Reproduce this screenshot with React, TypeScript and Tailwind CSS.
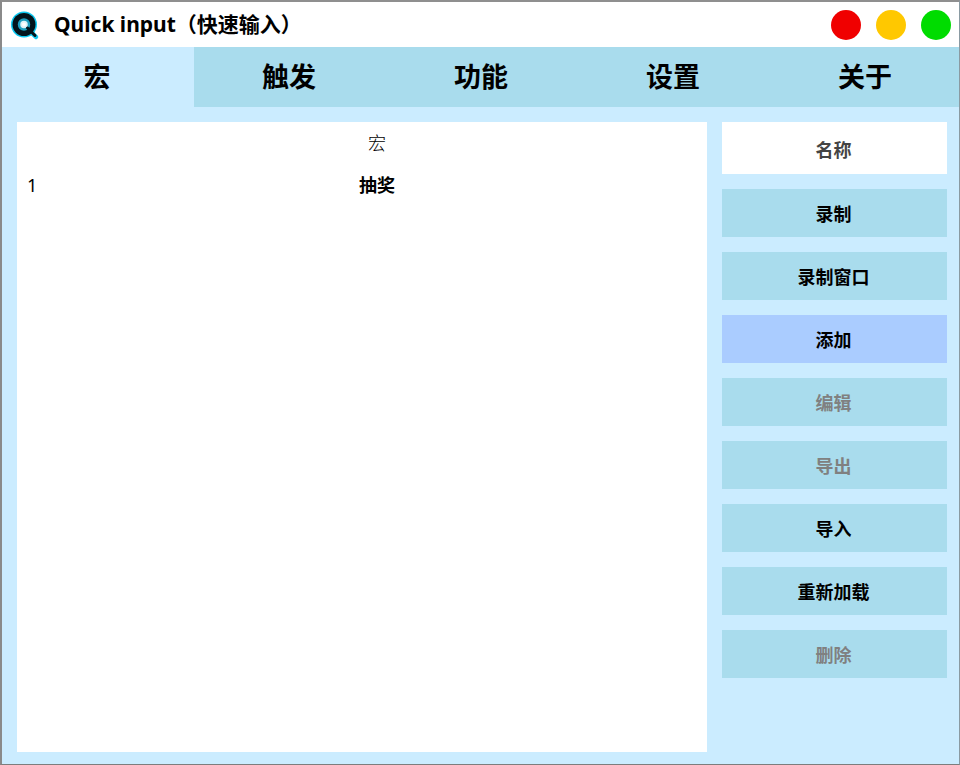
import React from "react";

const tabs = ["宏", "触发", "功能", "设置", "关于"];

const buttons = [
  { label: "录制" },
  { label: "录制窗口" },
  { label: "添加", active: true },
  { label: "编辑", disabled: true },
  { label: "导出", disabled: true },
  { label: "导入" },
  { label: "重新加载" },
  { label: "删除", disabled: true },
];

const Logo = () => (
  <svg width="30" height="30" viewBox="0 0 30 30" className="shrink-0">
    <defs>
      <filter id="glow" x="-30%" y="-30%" width="160%" height="160%">
        <feGaussianBlur stdDeviation="0.7" />
      </filter>
    </defs>
    <g filter="url(#glow)" stroke="#08c8f0" fill="none">
      <circle cx="15" cy="14.5" r="12" strokeWidth="2" />
      <path d="M20 20l7 7" strokeWidth="4.5" strokeLinecap="round" />
    </g>
    <circle cx="15" cy="14.5" r="11.5" fill="#03141c" />
    <circle cx="15" cy="14.5" r="5" fill="#dff3f8" stroke="#1f9fc0" strokeWidth="2.5" />
    <circle cx="15" cy="14.5" r="2" fill="#ffffff" />
    <path d="M18.5 18l7.5 7.5" stroke="#03141c" strokeWidth="3" strokeLinecap="round" />
  </svg>
);

const App = () => {
  return (
    <div className="h-[765px] w-[960px] overflow-hidden border-t-2 border-r border-b border-l-2 border-t-[#8f8f8f] border-r-[#8a9aa2] border-b-[#7d7d7d] border-l-[#8a8a8a] bg-[#cbecff] font-['Noto_Sans','Noto_Sans_CJK_SC',sans-serif] text-black">
      <div className="flex h-[45px] items-center bg-white pl-[7px] pr-[8px]">
        <Logo />
        <div className="ml-[15px] text-[21px] leading-none font-bold">Quick input（快速输入）</div>
        <div className="ml-auto flex gap-[15px]">
          <div className="h-[30px] w-[30px] rounded-full bg-[#f00000]" />
          <div className="h-[30px] w-[30px] rounded-full bg-[#ffc800]" />
          <div className="h-[30px] w-[30px] rounded-full bg-[#00dc00]" />
        </div>
      </div>

      <div className="flex h-[60px] w-[960px]">
        {tabs.map((t, i) => (
          <div
            key={t}
            className={`flex w-[192px] shrink-0 items-center justify-center pt-[1px] pr-[2px] text-[27px] font-bold ${i === 0 ? "bg-[#cbecff]" : "bg-[#a9dced]"}`}
          >
            {t}
          </div>
        ))}
      </div>

      <div className="flex gap-[15px] pl-[15px] pt-[15px]">
        <div className="h-[630px] w-[690px] bg-white">
          <div className="flex h-[42px] items-center pl-[30px]">
            <span className="w-full text-center text-[18px] leading-none font-light">宏</span>
          </div>
          <div className="flex h-[42px] items-center text-[18px] leading-none">
            <span className="w-[30px] pl-[10px]">1</span>
            <span className="flex-1 text-center font-bold">抽奖</span>
          </div>
        </div>

        <div className="flex w-[225px] flex-col gap-[15px]">
          <div className="flex h-[52px] items-center justify-center bg-white pt-[4px] pr-[2px] text-[18px] font-bold text-[#444444]">名称</div>
          {buttons.map((b) => (
            <div
              key={b.label}
              className={`flex h-[48px] items-center justify-center pt-[2px] pr-[2px] text-[18px] font-bold ${b.active ? "bg-[#aaccff]" : "bg-[#a9dced]"} ${b.disabled ? "text-[#808080]" : "text-black"}`}
            >
              {b.label}
            </div>
          ))}
        </div>
      </div>
    </div>
  );
};

export default App;
